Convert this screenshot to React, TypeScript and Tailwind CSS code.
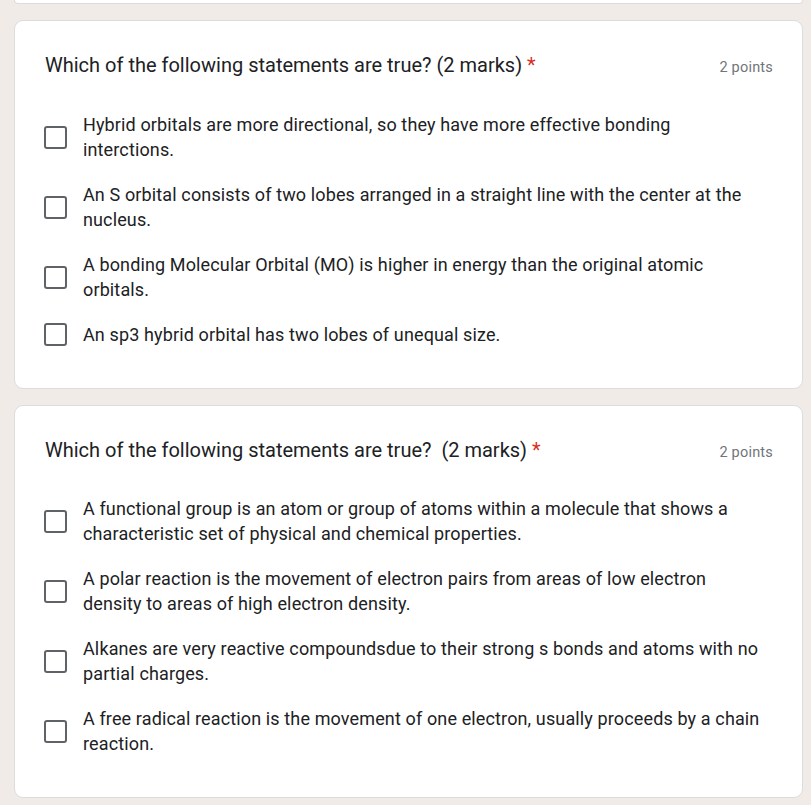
import React from "react";

type Q = { title: string; options: string[] };

const questions: Q[] = [
  {
    title: "Which of the following statements are true? (2 marks)",
    options: [
      "Hybrid orbitals are more directional, so they have more effective bonding interctions.",
      "An S orbital consists of two lobes arranged in a straight line with the center at the nucleus.",
      "A bonding Molecular Orbital (MO) is higher in energy than the original atomic orbitals.",
      "An sp3 hybrid orbital has two lobes of unequal size.",
    ],
  },
  {
    title: "Which of the following statements are true?  (2 marks)",
    options: [
      "A functional group is an atom or group of atoms within a molecule that shows a characteristic set of physical and chemical properties.",
      "A polar reaction is the movement of electron pairs from areas of low electron density to areas of high electron density.",
      "Alkanes are very reactive compoundsdue to their strong s bonds and atoms with no partial charges.",
      "A free radical reaction is the movement of one electron, usually proceeds by a chain reaction.",
    ],
  },
];

function Card({ q, first }: { q: Q; first: boolean }) {
  return (
    <div className="bg-white border border-[#dadce0] rounded-[9px] pl-[30px] pr-[29px] pb-[41px] pt-[30px]">
      <div className="flex items-baseline justify-between">
        <div className="text-[20px] leading-[28px] text-[#202124] whitespace-pre">
          {q.title} <span className="text-[#d93025]">*</span>
        </div>
        <div className="text-[14.5px] tracking-[0.2px] leading-[20px] text-[#70757a]">2 points</div>
      </div>
      <div className={`flex flex-col gap-[20px] ${first ? "mt-[33px]" : "mt-[32px]"}`}>
        {q.options.map((o, i) => (
          <div key={i} className="flex items-center">
            <div className="w-[23px] h-[23px] ml-[-1px] shrink-0 rounded-[3px] border-2 border-[#5f6368]" />
            <div className="ml-[16px] max-w-[681px] text-[18px] tracking-[0.13px] leading-[25px] text-[#202124]">
              {o}
            </div>
          </div>
        ))}
      </div>
    </div>
  );
}

export default function App() {
  return (
    <div
      className="min-h-[805px] bg-[#f1ebe7] pl-[14px] pr-[8px] pb-[8px]"
      style={{ fontFamily: "Roboto, 'Noto Sans', sans-serif" }}
    >
      <div className="h-[4px] bg-white border border-t-0 border-[#dadce0] rounded-b-[9px]" />
      <div className="flex flex-col gap-[16px] mt-[16px]">
        {questions.map((q, i) => (
          <Card key={i} q={q} first={i === 0} />
        ))}
      </div>
    </div>
  );
}
